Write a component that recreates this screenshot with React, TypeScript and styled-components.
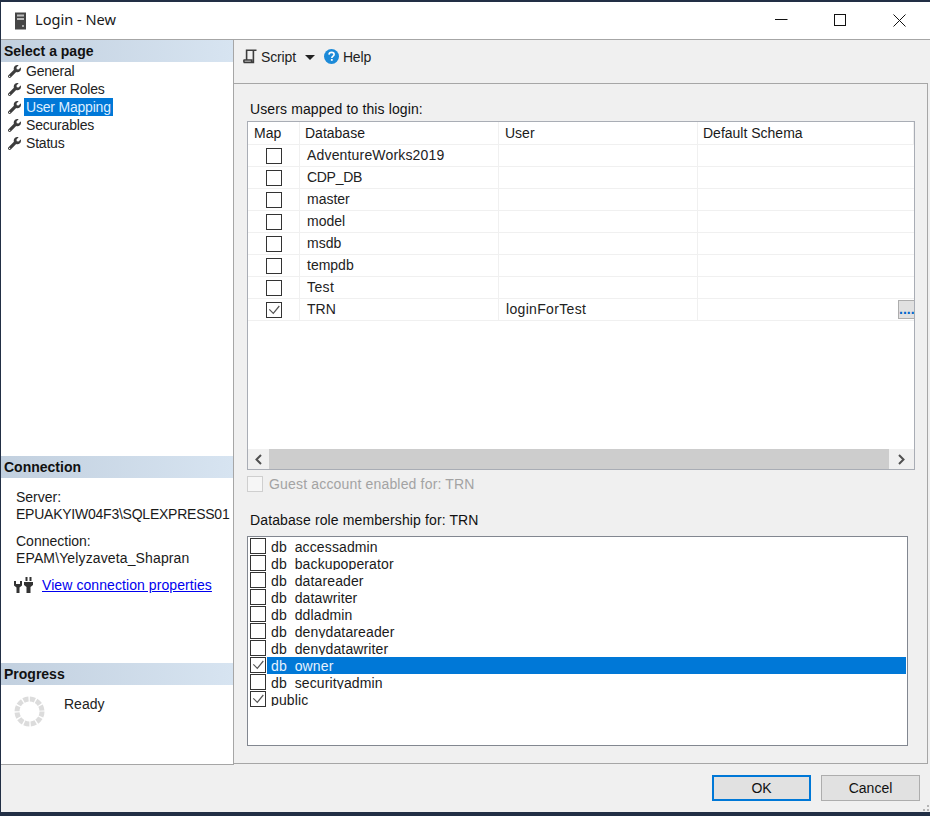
import React from "react";
import styled, { createGlobalStyle } from "styled-components";
import { FaWrench } from "react-icons/fa";

const GlobalStyle = createGlobalStyle`
  html, body {
    margin: 0;
    padding: 0;
    height: 100%;
    background: #f0f0f0;
    overflow: hidden;
  }
  #root {
    height: 100%;
  }
  * {
    box-sizing: border-box;
  }
`;

const Window = styled.div`
  width: 930px;
  height: 816px;
  display: flex;
  flex-direction: column;
  background: #f0f0f0;
  border-top: 2px solid #222f45;
  border-left: 1px solid #222f45;
  border-bottom: 4px solid #222f45;
  font-family: "Liberation Sans", Arial, sans-serif;
  font-size: 14px;
  color: #111;
  position: relative;
`;

const TitleBar = styled.div`
  height: 38px;
  flex: none;
  display: flex;
  align-items: center;
  background: #fff;
  border-bottom: 1px solid #a6a6a6;
  padding: 0 1px 0 13px;
`;

const TitleText = styled.span`
  font-family: "Noto Sans", sans-serif;
  font-size: 14.6px;
  margin: 0 0 4px 8px;
  color: #1a1a1a;
  flex: 1;
`;

const WindowButton = styled.div`
  width: 59px;
  height: 37px;
  display: flex;
  align-items: center;
  justify-content: center;
`;

const Main = styled.div`
  height: 725px;
  flex: none;
  display: flex;
`;

const Sidebar = styled.div`
  width: 233px;
  flex: none;
  display: flex;
  flex-direction: column;
  background: #fff;
  border-right: 1px solid #a6a6a6;
  border-bottom: 1px solid #a6a6a6;
`;

const SidebarSection = styled.div<{ $height?: number }>`
  height: ${(p) => (p.$height ? `${p.$height}px` : "auto")};
  flex: ${(p) => (p.$height ? "none" : "1")};
`;

const SectionHeader = styled.div`
  height: 22px;
  line-height: 22px;
  padding-left: 3px;
  font-weight: bold;
  background: linear-gradient(to right, #c2d0df, #d7e4f1);
`;

const PageItem = styled.div`
  height: 18px;
  display: flex;
  align-items: center;
  padding-left: 7px;
  color: #222;

  svg {
    color: #3d3d3d;
    flex: none;
  }
`;

const PageLabel = styled.span<{ $active?: boolean }>`
  margin-left: 3px;
  padding: 0 2px;
  height: 18px;
  line-height: 18px;
  letter-spacing: -0.2px;
  background: ${(p) => (p.$active ? "#0078d7" : "transparent")};
  color: ${(p) => (p.$active ? "#dfeeff" : "inherit")};
`;

const ConnectionBody = styled.div`
  padding: 11px 0 0 15px;
  line-height: 17px;
  color: #1a1a1a;
  white-space: nowrap;
`;

const ConnectionBlock = styled.div`
  margin-bottom: 10px;
`;

const ConnectionValue = styled.span<{ $spacing: number }>`
  letter-spacing: ${(p) => p.$spacing}px;
`;

const LinkRow = styled.div`
  height: 20px;
  display: flex;
  align-items: center;
  margin: -2px 0 0 -2px;
`;

const ConnectionLink = styled.a`
  color: #0000ee;
  text-decoration: underline;
  letter-spacing: 0.08px;
  margin-left: 9px;
`;

const ProgressBody = styled.div`
  display: flex;
  padding: 11px 0 0 13px;
`;

const ReadyText = styled.span`
  margin-left: 19px;
  line-height: 17px;
  color: #222;
`;

const Content = styled.div`
  flex: 1;
  display: flex;
  flex-direction: column;
  min-width: 0;
`;

const Toolbar = styled.div`
  height: 43px;
  flex: none;
  display: flex;
  align-items: center;
  padding: 0 0 10px 9px;
  color: #222;
`;

const ToolbarLabel = styled.span<{ $gap: number }>`
  margin-left: ${(p) => p.$gap}px;
  letter-spacing: -0.15px;
`;

const Caret = styled.span`
  width: 0;
  height: 0;
  margin: 1px 9px 0 9px;
  border-left: 5px solid transparent;
  border-right: 5px solid transparent;
  border-top: 5px solid #222;
`;

const Panel = styled.div`
  height: 681px;
  flex: none;
  margin-right: 2px;
  display: flex;
  flex-direction: column;
  padding: 17px 12px 0 13px;
  border-top: 1px solid #a6a6a6;
  border-right: 1px solid #a6a6a6;
  border-bottom: 1px solid #a6a6a6;
`;

const PanelLabel = styled.div<{ $gap: number }>`
  height: 16px;
  line-height: 16px;
  margin: 0 0 ${(p) => p.$gap}px 3px;
  letter-spacing: 0.12px;
  color: #111;
`;

const MapGrid = styled.div`
  width: 668px;
  height: 349px;
  flex: none;
  display: flex;
  flex-direction: column;
  background: #fff;
  border: 1px solid #a9adb5;
  overflow: hidden;
`;

const GridRow = styled.div`
  display: grid;
  grid-template-columns: 52px 199px 199px 1fr;
  height: 22px;
  flex: none;
  border-bottom: 1px solid #f0f0f0;
`;

const HeaderRow = styled(GridRow)`
  height: 23px;
`;

const HeaderCell = styled.div<{ $pad: number }>`
  line-height: 22px;
  padding-left: ${(p) => p.$pad}px;
  border-right: 1px solid #f0f0f0;
  color: #1a1a1a;
`;

const Cell = styled.div<{ $pad?: number }>`
  display: flex;
  align-items: center;
  padding-left: ${(p) => p.$pad ?? 7}px;
  border-right: 1px solid #f0f0f0;
  color: #222;
  min-width: 0;
`;

const CellText = styled.span<{ $spacing?: number }>`
  margin-bottom: 2px;
  letter-spacing: ${(p) => p.$spacing ?? 0}px;
`;

const SchemaCell = styled(Cell)`
  justify-content: flex-end;
  align-items: flex-start;
  padding: 1px 0 0;
  border-right: none;
`;

const EllipsisButton = styled.div`
  width: 16px;
  height: 19px;
  background: #e1e1e1;
  border: 1px solid #adadad;
  border-right: none;
  color: #0066cc;
  font-size: 14px;
  font-weight: bold;
  line-height: 17px;
  overflow: hidden;
  white-space: nowrap;
`;

const Box = styled.span<{ $disabled?: boolean }>`
  width: 16px;
  height: 16px;
  flex: none;
  display: block;
  background: ${(p) => (p.$disabled ? "#f6f6f6" : "#fff")};
  border: 1px solid ${(p) => (p.$disabled ? "#cfcfcf" : "#333")};

  svg {
    display: block;
  }
`;

const GridSpacer = styled.div`
  flex: 1;
`;

const ScrollBar = styled.div`
  height: 20px;
  flex: none;
  display: flex;
  background: #f0f0f0;
`;

const ScrollArrow = styled.div<{ $width: number }>`
  width: ${(p) => p.$width}px;
  flex: none;
  display: flex;
  align-items: center;
  justify-content: center;
`;

const ScrollThumb = styled.div`
  flex: 1;
  background: #cdcdcd;
`;

const GuestRow = styled.div`
  display: flex;
  align-items: center;
  height: 16px;
  margin: 6px 0 20px;
`;

const GuestLabel = styled.span`
  margin-left: 6px;
  letter-spacing: 0.17px;
  color: #a3a3a3;
`;

const RoleList = styled.div`
  width: 661px;
  height: 210px;
  flex: none;
  padding: 1px 1px 0 2px;
  background: #fff;
  border: 1px solid #828790;
`;

const RoleRow = styled.div`
  display: flex;
  height: 17px;
`;

const RoleName = styled.div<{ $selected?: boolean }>`
  flex: 1;
  height: 17px;
  margin-left: 1px;
  padding-left: 4px;
  letter-spacing: 0.12px;
  background: ${(p) => (p.$selected ? "#0078d7" : "transparent")};
  color: ${(p) => (p.$selected ? "#e6f2ff" : "#1a1a1a")};
`;

const RoleClip = styled.div`
  height: 15px;
  line-height: 16px;
  padding-top: 1px;
  overflow: hidden;
  white-space: nowrap;
`;

const Footer = styled.div`
  flex: 1;
  display: flex;
  justify-content: flex-end;
  gap: 10px;
  padding: 10px 10px 0 0;
`;

const DialogButton = styled.div<{ $primary?: boolean }>`
  width: 99px;
  height: 26px;
  display: flex;
  align-items: center;
  justify-content: center;
  background: #e1e1e1;
  border: ${(p) => (p.$primary ? "2px solid #0078d7" : "1px solid #adadad")};
  color: #111;
`;

const Grip = styled.svg`
  position: absolute;
  right: 1px;
  bottom: 1px;
`;

const Check = () => (
  <svg width="14" height="14" viewBox="0 0 14 14" fill="none">
    <path d="M2.3 6.3 L6.3 10.3 L12.3 3" stroke="#555" strokeWidth="1.2" />
  </svg>
);

const CheckBox = ({ checked, disabled }: { checked?: boolean; disabled?: boolean }) => (
  <Box $disabled={disabled}>{checked && <Check />}</Box>
);

const ServerIcon = () => (
  <svg width="13" height="18" viewBox="0 0 13 18">
    <path d="M1 0.5h11v17h-11z" fill="#454545" />
    <path d="M3 2.5h7v2h-7zM3 6h7v2h-7z" fill="#bdbdbd" />
    <rect x="8" y="13" width="2" height="2" fill="#a8a8a8" />
  </svg>
);

const ScriptIcon = () => (
  <svg width="14" height="15" viewBox="0 0 14 15" fill="none" stroke="#3c3c3c" strokeWidth="1.6">
    <path d="M13.5 1.2H3.6V11" />
    <path d="M10.4 1.2V13.4H1.2C0.8 12.6 0.8 11.6 1.2 11H8.6V13" />
  </svg>
);

const HelpIcon = () => (
  <svg width="15" height="15" viewBox="0 0 15 15">
    <circle cx="7.5" cy="7.5" r="7.5" fill="#1c8ad8" />
    <path
      d="M5 5.6C5.1 4.2 6.1 3.4 7.6 3.4C9.1 3.4 10.1 4.2 10.1 5.4C10.1 7 7.8 7.1 7.8 8.9"
      fill="none"
      stroke="#fff"
      strokeWidth="1.6"
    />
    <rect x="6.9" y="10" width="1.8" height="1.8" fill="#fff" />
  </svg>
);

const PlugIcon = () => (
  <svg width="19" height="16" viewBox="0 0 19 16" fill="#333">
    <path d="M0 4h2v3h4V4h2v4.5L5.5 10.5V16h-3v-5.5L0 8.5z" />
    <path d="M11.5 0h2v4h-2zM15.5 0h2v4h-2zM10 5h9v3l-2.5 2v6h-4v-6L10 8z" />
  </svg>
);

const Spinner = () => (
  <svg width="31" height="31" viewBox="0 0 31 31" fill="none">
    <circle cx="15.5" cy="15.5" r="12.5" stroke="#dcdcdc" strokeWidth="5" strokeDasharray="5.2 1.34" />
  </svg>
);

const Chevron = ({ left }: { left?: boolean }) => (
  <svg width="9" height="11" viewBox="0 0 9 11" fill="none">
    <path d={left ? "M7 1L2.5 5.5L7 10" : "M2 1L6.5 5.5L2 10"} stroke="#505050" strokeWidth="2" />
  </svg>
);

const pages = ["General", "Server Roles", "User Mapping", "Securables", "Status"];

const databases: { name: string; spacing?: number; user?: string; checked?: boolean }[] = [
  { name: "AdventureWorks2019", spacing: 0.17 },
  { name: "CDP_DB", spacing: -0.3 },
  { name: "master" },
  { name: "model" },
  { name: "msdb" },
  { name: "tempdb" },
  { name: "Test", spacing: 0.4 },
  { name: "TRN", user: "loginForTest", checked: true },
];

const roles = [
  { name: "db_accessadmin" },
  { name: "db_backupoperator" },
  { name: "db_datareader" },
  { name: "db_datawriter" },
  { name: "db_ddladmin" },
  { name: "db_denydatareader" },
  { name: "db_denydatawriter" },
  { name: "db_owner", checked: true, selected: true },
  { name: "db_securityadmin" },
  { name: "public", checked: true },
];

export default function App() {
  return (
    <Window>
      <GlobalStyle />
      <TitleBar>
        <ServerIcon />
        <TitleText>Login - New</TitleText>
        <WindowButton>
          <svg width="13" height="13" viewBox="0 0 13 13">
            <path d="M0 5.5h12.5" stroke="#111" strokeWidth="1" />
          </svg>
        </WindowButton>
        <WindowButton>
          <svg width="13" height="13" viewBox="0 0 13 13" fill="none">
            <rect x="0.5" y="0.5" width="11" height="11" stroke="#111" />
          </svg>
        </WindowButton>
        <WindowButton>
          <svg width="13" height="13" viewBox="0 0 13 13">
            <path d="M0.5 0.5L12.5 12.5M12.5 0.5L0.5 12.5" stroke="#111" strokeWidth="1" />
          </svg>
        </WindowButton>
      </TitleBar>

      <Main>
        <Sidebar>
          <SidebarSection $height={416}>
            <SectionHeader>Select a page</SectionHeader>
            {pages.map((page) => (
              <PageItem key={page}>
                <FaWrench size={13} />
                <PageLabel $active={page === "User Mapping"}>{page}</PageLabel>
              </PageItem>
            ))}
          </SidebarSection>

          <SidebarSection $height={207}>
            <SectionHeader>Connection</SectionHeader>
            <ConnectionBody>
              <ConnectionBlock>
                Server:
                <br />
                <ConnectionValue $spacing={-0.24}>EPUAKYIW04F3\SQLEXPRESS01</ConnectionValue>
              </ConnectionBlock>
              <ConnectionBlock>
                Connection:
                <br />
                <ConnectionValue $spacing={0.13}>EPAM\Yelyzaveta_Shapran</ConnectionValue>
              </ConnectionBlock>
              <LinkRow>
                <PlugIcon />
                <ConnectionLink href="#">View connection properties</ConnectionLink>
              </LinkRow>
            </ConnectionBody>
          </SidebarSection>

          <SidebarSection>
            <SectionHeader>Progress</SectionHeader>
            <ProgressBody>
              <Spinner />
              <ReadyText>Ready</ReadyText>
            </ProgressBody>
          </SidebarSection>
        </Sidebar>

        <Content>
          <Toolbar>
            <ScriptIcon />
            <ToolbarLabel $gap={4}>Script</ToolbarLabel>
            <Caret />
            <HelpIcon />
            <ToolbarLabel $gap={4}>Help</ToolbarLabel>
          </Toolbar>

          <Panel>
            <PanelLabel $gap={4}>Users mapped to this login:</PanelLabel>
            <MapGrid>
              <HeaderRow>
                <HeaderCell $pad={6}>Map</HeaderCell>
                <HeaderCell $pad={5}>Database</HeaderCell>
                <HeaderCell $pad={6}>User</HeaderCell>
                <HeaderCell $pad={5}>Default Schema</HeaderCell>
              </HeaderRow>
              {databases.map((db) => (
                <GridRow key={db.name}>
                  <Cell $pad={18}>
                    <CheckBox checked={db.checked} />
                  </Cell>
                  <Cell>
                    <CellText $spacing={db.spacing}>{db.name}</CellText>
                  </Cell>
                  <Cell>
                    <CellText $spacing={0.33}>{db.user}</CellText>
                  </Cell>
                  <SchemaCell>{db.checked && <EllipsisButton>....</EllipsisButton>}</SchemaCell>
                </GridRow>
              ))}
              <GridSpacer />
              <ScrollBar>
                <ScrollArrow $width={21}>
                  <Chevron left />
                </ScrollArrow>
                <ScrollThumb />
                <ScrollArrow $width={25}>
                  <Chevron />
                </ScrollArrow>
              </ScrollBar>
            </MapGrid>

            <GuestRow>
              <CheckBox disabled />
              <GuestLabel>Guest account enabled for: TRN</GuestLabel>
            </GuestRow>

            <PanelLabel $gap={8}>Database role membership for: TRN</PanelLabel>
            <RoleList>
              {roles.map((role) => (
                <RoleRow key={role.name}>
                  <CheckBox checked={role.checked} />
                  <RoleName $selected={role.selected}>
                    <RoleClip>{role.name}</RoleClip>
                  </RoleName>
                </RoleRow>
              ))}
            </RoleList>
          </Panel>
        </Content>
      </Main>

      <Footer>
        <DialogButton $primary>OK</DialogButton>
        <DialogButton>Cancel</DialogButton>
      </Footer>

      <Grip width="6" height="6" viewBox="0 0 6 6" fill="#b5b5b5">
        <path d="M4 0h2v2H4zM0 4h2v2H0zM4 4h2v2H4z" />
      </Grip>
    </Window>
  );
}
